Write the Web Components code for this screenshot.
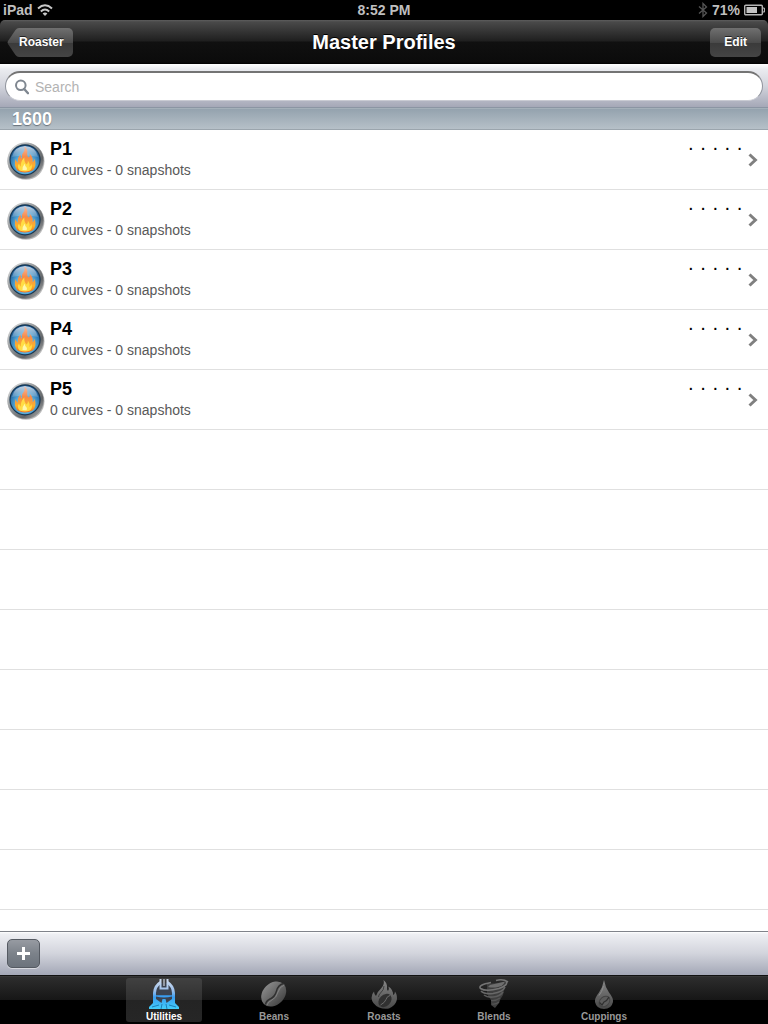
<!DOCTYPE html>
<html lang="en">
<head>
<meta charset="utf-8">
<meta name="viewport" content="width=device-width, initial-scale=1">
<title>Master Profiles</title>
<style>
    body {
        margin: 0;
        background: #000;
        font-family: "Liberation Sans", Arial, sans-serif;
    }
</style>
</head>
<body>
<profile-app></profile-app>

<script>
class StatusBar extends HTMLElement {
    constructor() {
        super();
        this.attachShadow({mode: "open"}).innerHTML = `
        <style>
        :host {
            display: grid;
            grid-template-columns: 1fr auto 1fr;
            align-items: center;
            height: 20px;
            padding: 0 3px;
            background: #000;
            color: #bfbfbf;
            font-size: 14px;
            line-height: 20px;
            font-weight: bold;
        }
        div {
            display: flex;
            align-items: center;
            gap: 4px;
        }
        .right {
            justify-content: flex-end;
        }
        svg {
            display: block;
        }
        </style>
        <div>
            <span>iPad</span>
            <svg width="16" height="12" viewBox="0 0 16 12" fill="none" stroke="#c8c8c8" stroke-width="2">
                <path d="M1 4.4 Q8 -1.8 15 4.4"/>
                <path d="M3.8 7.4 Q8 3.6 12.2 7.4"/>
                <path d="M8 12 L5.6 9.4 Q8 7.4 10.4 9.4 Z" fill="#c8c8c8" stroke="none"/>
            </svg>
        </div>
        <span>8:52 PM</span>
        <div class="right">
            <svg width="10" height="16" viewBox="0 0 10 16" fill="none" stroke="#555" stroke-width="1.3">
                <path d="M1 4.5 L8.5 11 L5 14.5 V1.5 L8.5 5 L1 11.5"/>
            </svg>
            <span>71%</span>
            <svg width="21" height="12" viewBox="0 0 21 12">
                <rect x=".7" y="1.2" width="17.6" height="9.6" rx="1" fill="none" stroke="#b5b5b5" stroke-width="1.4"/>
                <rect x="2.5" y="3" width="10.5" height="6" fill="#c4c4c4"/>
                <path d="M18.5 4 H19.5 Q20.5 4 20.5 5 V7 Q20.5 8 19.5 8 H18.5" fill="none" stroke="#b5b5b5" stroke-width="1.2"/>
            </svg>
        </div>
        `;
    }
}

class NavBar extends HTMLElement {
    constructor() {
        super();
        this.attachShadow({mode: "open"}).innerHTML = `
        <style>
        :host {
            display: grid;
            grid-template-columns: 1fr auto 1fr;
            align-items: center;
            height: 44px;
            box-sizing: border-box;
            padding: 0 7px;
            border-radius: 5px 5px 0 0;
            background: linear-gradient(#5e5e5e 0, #494949 2px, #1f1f1f 21px, #101010 22px, #0b0b0b 42px, #000);
            color: #fff;
        }
        h1 {
            margin: 0;
            font-size: 20px;
            line-height: 24px;
            text-shadow: 0 -1px 0 #000;
        }
        button {
            height: 29px;
            border: 0;
            padding: 0 14px;
            border-radius: 5px;
            background: linear-gradient(#707070, #4b4b4b 50%, #3a3a3a 51%, #454545);
            color: #fff;
            font: bold 12px "Liberation Sans", Arial, sans-serif;
            text-shadow: 0 -1px 0 #222;
        }
        .back {
            justify-self: start;
            display: flex;
            align-items: center;
            padding: 0;
            background: none;
        }
        .back svg {
            display: block;
        }
        .back span {
            height: 29px;
            line-height: 28px;
            padding-right: 9px;
            border-radius: 0 5px 5px 0;
            background: linear-gradient(#707070, #4b4b4b 50%, #3a3a3a 51%, #454545);
        }
        .edit {
            justify-self: end;
        }
        </style>
        <button class="back" type="button">
            <svg width="12" height="29" viewBox="0 0 12 29">
                <defs>
                    <linearGradient id="metal" x2="0" y2="1">
                        <stop stop-color="#707070"/>
                        <stop offset=".5" stop-color="#4b4b4b"/>
                        <stop offset=".51" stop-color="#3a3a3a"/>
                        <stop offset="1" stop-color="#454545"/>
                    </linearGradient>
                </defs>
                <path d="M12 0 Q10 0 8.5 2 L1 13 Q0 14.5 1 16 L8.5 27 Q10 29 12 29 Z" fill="url(#metal)"/>
            </svg>
            <span>Roaster</span>
        </button>
        <h1><slot></slot></h1>
        <button class="edit" type="button">Edit</button>
        `;
    }
}

class SearchField extends HTMLElement {
    constructor() {
        super();
        this.attachShadow({mode: "open"}).innerHTML = `
        <style>
        :host {
            display: block;
            height: 44px;
            box-sizing: border-box;
            padding: 7px 5px;
            border-bottom: 1px solid #8b95a3;
            background: linear-gradient(#fff, #ebecf0 5px, #d3d5dd 50%, #a5a8b7);
        }
        label {
            display: flex;
            align-items: center;
            gap: 6px;
            height: 30px;
            box-sizing: border-box;
            padding: 0 10px 0 9px;
            border: 1px solid #8f939c;
            border-top: 2px solid #747474;
            border-bottom-color: #c9cbd3;
            border-radius: 15px;
            background: #fff;
        }
        svg {
            flex: none;
        }
        input {
            flex: 1;
            min-width: 0;
            border: 0;
            padding: 0;
            outline: 0;
            background: none;
            font: 14px "Liberation Sans", Arial, sans-serif;
            line-height: 20px;
        }
        input::placeholder {
            color: #b3b3b3;
        }
        </style>
        <label>
            <svg width="14" height="16" viewBox="0 0 14 16" fill="none" stroke="#7f8790">
                <circle cx="5.8" cy="6.3" r="4.8" stroke-width="2"/>
                <path d="M9.2 10 L13 14.2" stroke-width="2.4" stroke-linecap="round"/>
            </svg>
            <input type="text" placeholder="Search" aria-label="Search">
        </label>
        `;
    }
}

class SectionHeader extends HTMLElement {
    constructor() {
        super();
        this.attachShadow({mode: "open"}).innerHTML = `
        <style>
        :host {
            display: block;
            height: 22px;
            box-sizing: border-box;
            padding-left: 12px;
            border-top: 1px solid #a4b0b9;
            border-bottom: 1px solid #9ba5ad;
            background: linear-gradient(#94a2ae, #b6c0c8);
        }
        h2 {
            margin: 0;
            color: #fff;
            font-size: 18px;
            line-height: 21px;
            text-shadow: 0 1px 1px #66707a;
        }
        </style>
        <h2><slot></slot></h2>
        `;
    }
}

class ProfileRow extends HTMLElement {
    constructor() {
        super();
        this.attachShadow({mode: "open"}).innerHTML = `
        <style>
        :host {
            display: flex;
            height: 60px;
            box-sizing: border-box;
            padding: 0 10px 0 6px;
            border-bottom: 1px solid #e0e0e0;
            background: #fff;
        }
        .badge {
            flex: none;
            margin: 11px 5px 0 0;
        }
        .text {
            flex: 1;
            padding-top: 8px;
        }
        h3 {
            margin: 0;
            color: #000;
            font-size: 18px;
            line-height: 22px;
        }
        p {
            margin: 0;
            color: #595959;
            font-size: 14px;
            line-height: 20px;
        }
        .rating {
            padding: 7px 5px 0 0;
            color: #000;
            font-size: 20px;
            line-height: 20px;
        }
        .arrow {
            flex: none;
            align-self: center;
        }
        </style>
        <svg class="badge" width="39" height="39" viewBox="0 0 39 39">
            <defs>
                <linearGradient id="rim" x1=".1" y1=".1" x2=".9" y2=".9">
                    <stop stop-color="#d4d6d7"/>
                    <stop offset=".45" stop-color="#8b8e90"/>
                    <stop offset=".75" stop-color="#606366"/>
                    <stop offset="1" stop-color="#a3a5a6"/>
                </linearGradient>
                <radialGradient id="glass" cx=".5" cy=".65" r=".62">
                    <stop stop-color="#b4ecfc"/>
                    <stop offset=".5" stop-color="#58b0e0"/>
                    <stop offset="1" stop-color="#1a5793"/>
                </radialGradient>
                <linearGradient id="shine" x2="0" y2="1">
                    <stop stop-color="#fff" stop-opacity=".75"/>
                    <stop offset="1" stop-color="#fff" stop-opacity=".15"/>
                </linearGradient>
                <linearGradient id="fire" x2="0" y2="1">
                    <stop stop-color="#f9b9a0"/>
                    <stop offset=".4" stop-color="#f58a4a"/>
                    <stop offset=".75" stop-color="#fbb22d"/>
                    <stop offset="1" stop-color="#f16a20"/>
                </linearGradient>
            </defs>
            <circle cx="20" cy="20.3" r="18.5" fill="#777" opacity=".5"/>
            <circle cx="19.5" cy="19.6" r="18.2" fill="url(#rim)"/>
            <circle cx="19" cy="18.8" r="15.6" fill="#173650"/>
            <circle cx="19" cy="18.8" r="14.4" fill="url(#glass)"/>
            <path d="M6 16 Q8 5.500 19 5 Q30 5.500 32 16 Q19 13 6 16Z" fill="url(#shine)"/>
            <path d="M11.500 29.500 Q7.500 25 9.500 18 Q10.500 21 11.800 21.800 Q11 17 14.500 13.500 Q14.500 17 16 17.500 Q15.200 13 18 10.500 Q19.300 8.500 18.500 5.500 Q22.200 8.500 21.200 12.200 Q20.800 14.800 22.800 16.500 Q24.300 15 23.500 12.500 Q27.500 16.500 26.600 21 Q28.300 20 28.500 17.500 Q31 24.500 27 29.200 Q19 33.500 11.500 29.500Z" fill="url(#fire)"/>
            <path d="M13.500 29.500 Q10.500 26 13 22.500 Q13.800 25 14.800 25.500 Q14.500 20.500 18.300 16.500 Q18 21 20.500 23.500 Q22.300 21.800 21.900 19.500 Q24.300 23 23.500 26 Q25 25 25.300 23 Q27 27 24 29.500 Q19 31.500 13.500 29.500Z" fill="#ffdc45"/>
            <path d="M16.500 29 Q16 26 18.700 22.800 Q19 25.500 20.500 26.300 Q21.500 28 20.500 29.300Z" fill="#fff7ad"/>
        </svg>
        <div class="text">
            <h3><slot></slot></h3>
            <p>0 curves - 0 snapshots</p>
        </div>
        <div class="rating">· · · · ·</div>
        <svg class="arrow" width="10" height="14" viewBox="0 0 10 14" fill="none" stroke="#808080" stroke-width="3">
            <path d="M1.5 1.5 L7.4 7 L1.5 12.5"/>
        </svg>
        `;
    }
}

class ProfileList extends HTMLElement {
    constructor() {
        super();
        // the ruled background carries on under the last profile
        this.attachShadow({mode: "open"}).innerHTML = `
        <style>
        :host {
            display: block;
            background: repeating-linear-gradient(#fff 0, #fff 59px, #e0e0e0 59px, #e0e0e0 60px);
        }
        </style>
        <slot></slot>
        `;
    }
}

class ToolBar extends HTMLElement {
    constructor() {
        super();
        this.attachShadow({mode: "open"}).innerHTML = `
        <style>
        :host {
            display: flex;
            align-items: center;
            height: 44px;
            box-sizing: border-box;
            padding: 0 7px;
            border-top: 1px solid #80838a;
            background: linear-gradient(#fff 0, #eeeff3 2px, #d2d4dc 50%, #a3a7b6);
        }
        button {
            display: flex;
            align-items: center;
            justify-content: center;
            width: 33px;
            height: 29px;
            padding: 0;
            border: 1px solid #555a62;
            border-radius: 5px;
            background: linear-gradient(#979ba2, #7c828a 50%, #6c737c);
            box-shadow: 0 1px 0 #d7d9df;
        }
        </style>
        <button type="button" aria-label="Add profile">
            <svg width="13" height="13" viewBox="0 0 13 13"><path d="M6.5 0 V13 M0 6.5 H13" stroke="#fff" stroke-width="3"/></svg>
        </button>
        `;
    }
}

class TabItem extends HTMLElement {
    constructor() {
        super();
        this.attachShadow({mode: "open"}).innerHTML = `
        <style>
        :host {
            display: block;
            width: 76px;
        }
        button {
            display: flex;
            flex-direction: column;
            align-items: center;
            width: 100%;
            height: 44px;
            padding: 0;
            border: 0;
            border-radius: 3px;
            background: none;
            color: #999;
            font: bold 10px "Liberation Sans", Arial, sans-serif;
            line-height: 12px;
        }
        :host([selected]) button {
            background: linear-gradient(#414141, #303030 50%, #242424 51%, #262626);
            color: #fff;
        }
        .icon {
            height: 32px;
        }
        .label {
            line-height: 14px;
        }
        </style>
        <button type="button">
            <span class="icon"><slot name="icon"></slot></span>
            <span class="label"><slot></slot></span>
        </button>
        `;
    }
}

class TabBar extends HTMLElement {
    constructor() {
        super();
        this.attachShadow({mode: "open"}).innerHTML = `
        <style>
        :host {
            display: flex;
            justify-content: center;
            gap: 34px;
            height: 49px;
            box-sizing: border-box;
            padding-top: 2px;
            border-top: 1px solid #111;
            background: linear-gradient(#404040 0, #2d2d2d 1px, #161616 24px, #000 24px);
        }
        </style>
        <slot></slot>
        `;
    }
}

class ProfileApp extends HTMLElement {
    constructor() {
        super();
        this.attachShadow({mode: "open"}).innerHTML = `
        <style>
        :host {
            display: flex;
            flex-direction: column;
            min-height: 100vh;
        }
        profile-list {
            flex: 1;
        }
        tab-item svg {
            display: block;
        }
        </style>
        <status-bar></status-bar>
        <nav-bar>Master Profiles</nav-bar>
        <search-field></search-field>
        <section-header>1600</section-header>
        <profile-list>
            <profile-row>P1</profile-row>
            <profile-row>P2</profile-row>
            <profile-row>P3</profile-row>
            <profile-row>P4</profile-row>
            <profile-row>P5</profile-row>
        </profile-list>
        <tool-bar></tool-bar>
        <tab-bar>
            <tab-item selected>
                <svg slot="icon" width="32" height="32" viewBox="0 0 32 32">
                    <defs>
                        <linearGradient id="blue" gradientUnits="userSpaceOnUse" x1="0" y1="0" x2="0" y2="32">
                            <stop stop-color="#d3deee"/>
                            <stop offset=".4" stop-color="#9cbfea"/>
                            <stop offset=".6" stop-color="#3a9df0"/>
                            <stop offset="1" stop-color="#43d2fa"/>
                        </linearGradient>
                    </defs>
                    <path d="M7 25 V15 Q7 8 12 5 H20 Q25 8 25 15 V25Z" fill="#3b4350"/>
                    <path d="M6.500 26 V15 Q6.800 8 12.500 4.500 M25.500 26 V15 Q25.200 8 19.500 4.500" fill="none" stroke="url(#blue)" stroke-width="3"/>
                    <path d="M12.500 1 V10.500 H19.500 V1" fill="none" stroke="url(#blue)" stroke-width="2"/>
                    <path d="M16 1 V8" stroke="#9298a1" stroke-width="2"/>
                    <path d="M8 17.300 H24 V18.500 Q16 20.500 8 18.500Z" fill="#3a9df0"/>
                    <path d="M1 31 V29 L5 25 V22 L8 21 L13.500 25 L14.500 21 H17.500 L18.500 25 L24 21 L27 22 V25 L31 29 V31Z" fill="url(#blue)"/>
                    <path d="M13 31 L14 26 M19 31 L18 26 M4 29 L11 27 M28 29 L21 27" fill="none" stroke="#1e7fb8"/>
                </svg>
                Utilities
            </tab-item>
            <tab-item>
                <svg slot="icon" width="32" height="32" viewBox="0 0 32 32">
                    <defs>
                        <linearGradient id="gray" x2="0" y2="1">
                            <stop stop-color="#868686"/>
                            <stop offset="1" stop-color="#484848"/>
                        </linearGradient>
                    </defs>
                    <ellipse cx="15.700" cy="16" rx="14" ry="10.800" transform="rotate(-45 15.700 16)" fill="url(#gray)"/>
                    <path d="M25.500 5.500 Q20 7 18.500 13 Q17 19 12 21 Q8 23 7.500 26.500" fill="none" stroke="#303030" stroke-width="1.400"/>
                    <path d="M26.500 7 Q21.500 8.500 20 14 Q18.500 20 13.500 22.300 Q10 24 9 27" fill="none" stroke="#8f8f8f" stroke-width=".7"/>
                </svg>
                Beans
            </tab-item>
            <tab-item>
                <svg slot="icon" width="32" height="32" viewBox="0 0 32 32">
                    <path fill="url(#gray)" d="M11 29.500 Q4 26 3.500 20 Q3.500 16 6 13.500 Q6 16 8 18 Q9 14 13 10.500 Q17 6.500 15.500 2 Q19.500 5 19 10 Q18.800 12 20 13 Q21.500 11.500 20.500 8.500 Q25.500 12 25 17 Q27 16 27 13.500 Q30 18 28.500 23 Q27 28 21 30.500 Q16 31.500 11 29.500Z"/>
                    <path d="M16 8 Q16 12 12.500 15 Q10.500 17 10.500 19" fill="none" stroke="#333" stroke-width=".8"/>
                    <ellipse cx="17" cy="22.500" rx="7.500" ry="5.600" transform="rotate(-45 17 22.500)" fill="#303030"/>
                    <path d="M22 17.500 Q19 18 18 21.500 Q17 24.500 12.500 27" fill="none" stroke="#6b6b6b"/>
                </svg>
                Roasts
            </tab-item>
            <tab-item>
                <svg slot="icon" width="32" height="32" viewBox="0 0 32 32">
                    <path fill="#3e3e3e" d="M9 6 L28 4 L25 17 Q22 21 21 25 L17 30 L13 27 L13 22 L9 16Z"/>
                    <g fill="none" stroke="#747474" stroke-width="1.600">
                        <path d="M30 4 Q25 .5 18 2.500 M28 3 Q31 7 21 10.500 Q8 14 2.500 10.500 Q-.5 7 13 4.500"/>
                        <path d="M27 9 Q25 14 15 15.500 Q6 16.500 3 13" stroke="#686868"/>
                        <path d="M25 14 Q22 18.500 15 19 Q9 19.500 6 17" stroke="#5c5c5c"/>
                    </g>
                    <path d="M22 20 Q18 23 13 22.500 M21 24 Q18 26.500 14 26" fill="none" stroke="#555" stroke-width="1.200"/>
                    <path d="M12 7 Q20 5 27 3.500 Q25 8 20 9 Q15 10 10 9Z" fill="#6e6e6e"/>
                </svg>
                Blends
            </tab-item>
            <tab-item>
                <svg slot="icon" width="32" height="32" viewBox="0 0 32 32">
                    <path d="M16 2 Q17.200 9 21 14.500 Q25.500 20 25 24 Q23.500 31 16 31 Q8.500 31 7 24 Q6.500 20 11 14.500 Q14.800 9 16 2Z" fill="url(#gray)"/>
                    <ellipse cx="16.500" cy="23.500" rx="6" ry="4.500" transform="rotate(-42 16.500 23.500)" fill="#5d5d5d" stroke="#444"/>
                    <path d="M21 19 Q19 23 16 24 L14 27 L11.500 24.500" fill="none" stroke="#303030" stroke-width="1.300"/>
                    <path d="M15.500 8 Q14 14 11 17.500" fill="none" stroke="#8c8c8c" stroke-width="1"/>
                </svg>
                Cuppings
            </tab-item>
        </tab-bar>
        `;
    }
}

customElements.define("status-bar", StatusBar);
customElements.define("nav-bar", NavBar);
customElements.define("search-field", SearchField);
customElements.define("section-header", SectionHeader);
customElements.define("profile-row", ProfileRow);
customElements.define("profile-list", ProfileList);
customElements.define("tool-bar", ToolBar);
customElements.define("tab-item", TabItem);
customElements.define("tab-bar", TabBar);
customElements.define("profile-app", ProfileApp);
</script>
</body>
</html>
